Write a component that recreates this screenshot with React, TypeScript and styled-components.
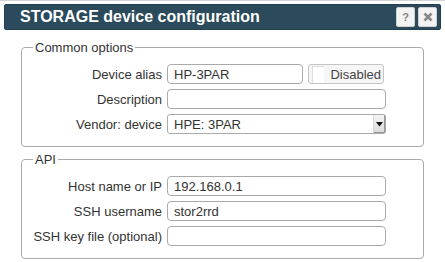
import styled, { createGlobalStyle } from "styled-components"

const GlobalStyle = createGlobalStyle`
  html, body {
    margin: 0;
    padding: 0;
    background: #ffffff;
  }
  body {
    font-family: "Liberation Sans", Arial, sans-serif;
    font-size: 13px;
    color: #333333;
  }
`

// dialog frame with a title bar and two fieldsets
const App = () => {
    return (
        <>
            <GlobalStyle />
            <Dialog>
                <TitleBar>
                    <Title>STORAGE device configuration</Title>
                    <TitleButtons>
                        <TitleButton title="Help">?</TitleButton>
                        <TitleButton title="Close">
                            <svg width="10" height="10" viewBox="0 0 10 10">
                                <path d="M1.5 1.5 L8.5 8.5 M8.5 1.5 L1.5 8.5" stroke="#888" strokeWidth="2.6" />
                            </svg>
                        </TitleButton>
                    </TitleButtons>
                </TitleBar>

                <Content>
                    <Group>
                        <Legend>Common options</Legend>
                        <Row>
                            <Label>Device alias</Label>
                            <Input $width={136} defaultValue="HP-3PAR" />
                            <ToggleButton>
                                <ToggleBox />
                                <span>Disabled</span>
                            </ToggleButton>
                        </Row>
                        <Row>
                            <Label>Description</Label>
                            <Input $width={219} defaultValue="" />
                        </Row>
                        <Row>
                            <Label>Vendor: device</Label>
                            <Select>
                                <SelectText>HPE: 3PAR</SelectText>
                                <SelectArrow>
                                    <svg width="7" height="5" viewBox="0 0 7 5">
                                        <path d="M0 0 H7 L3.5 4.5 Z" fill="#111" />
                                    </svg>
                                </SelectArrow>
                            </Select>
                        </Row>
                    </Group>

                    <Group>
                        <Legend>API</Legend>
                        <Row>
                            <Label>Host name or IP</Label>
                            <Input $width={219} defaultValue="192.168.0.1" />
                        </Row>
                        <Row>
                            <Label>SSH username</Label>
                            <Input $width={219} defaultValue="stor2rrd" />
                        </Row>
                        <Row>
                            <Label>SSH key file (optional)</Label>
                            <Input $width={219} defaultValue="" />
                        </Row>
                    </Group>
                </Content>
            </Dialog>
        </>
    )
}

export default App

const Dialog = styled.div`
  width: 445px;
  height: 262px;
  box-sizing: border-box;
  border-top: 1px solid #d3d3d3;
  padding: 3px 4px 0 4px;
  overflow: hidden;
`

const TitleBar = styled.div`
  height: 26px;
  box-sizing: border-box;
  background: #2b4a5b;
  border: 1px solid #24404f;
  border-radius: 2px;
  display: flex;
  align-items: center;
  justify-content: space-between;
  padding: 0 3px 0 15px;
`

const Title = styled.div`
  color: #ffffff;
  font-weight: bold;
  font-size: 16px;
`

const TitleButtons = styled.div`
  display: flex;
  gap: 3px;
`

const TitleButton = styled.div`
  width: 19px;
  height: 20px;
  box-sizing: border-box;
  background: #f3f3f3;
  border: 1px solid #d0d0d0;
  border-radius: 2px;
  display: flex;
  align-items: center;
  justify-content: center;
  color: #888888;
  font-weight: bold;
  font-size: 11px;
`

const Content = styled.div`
  padding: 10px 17px 0 17px;
  display: flex;
  flex-direction: column;
  gap: 5px;
`

const Group = styled.fieldset`
  margin: 0;
  padding: 9px 0 12px 0;
  border: 1px solid #aaaaaa;
  border-radius: 4px;
  display: flex;
  flex-direction: column;
  gap: 5px;
  min-width: 0;
`

const Legend = styled.legend`
  margin-left: 11px;
  padding: 0 2px;
  font-size: 13px;
  color: #333333;
`

const Row = styled.div`
  display: flex;
  align-items: center;
  gap: 5px;
  height: 20px;
`

const Label = styled.label`
  width: 140px;
  text-align: right;
  font-size: 13px;
  color: #333333;
  white-space: nowrap;
`

const Input = styled.input<{ $width: number }>`
  width: ${p => p.$width}px;
  height: 20px;
  box-sizing: border-box;
  border: 1px solid #aaaaaa;
  border-radius: 4px;
  padding: 0 6px;
  font-family: "Liberation Sans", Arial, sans-serif;
  font-size: 13px;
  color: #333333;
  outline: none;
  background: #ffffff;
`

const ToggleButton = styled.div`
  width: 76px;
  height: 20px;
  box-sizing: border-box;
  border: 1px solid #c5c5c5;
  border-radius: 3px;
  background: #f6f6f6;
  display: flex;
  align-items: center;
  justify-content: space-between;
  padding: 1px 2px 1px 3px;
  font-size: 13px;
  color: #454545;
`

const ToggleBox = styled.span`
  width: 11px;
  height: 16px;
  background: #ffffff;
  border-left: 1px solid #dddddd;
  border-top: 1px solid #dddddd;
`

const Select = styled.div`
  width: 219px;
  height: 20px;
  box-sizing: border-box;
  border: 1px solid #aaaaaa;
  border-radius: 3px;
  display: flex;
  align-items: center;
  justify-content: space-between;
  background: #ffffff;
`

const SelectText = styled.span`
  padding-left: 6px;
  font-size: 13px;
  color: #333333;
`

const SelectArrow = styled.span`
  width: 12px;
  height: 18px;
  box-sizing: border-box;
  background: linear-gradient(#f4f4f4, #dadada);
  border-left: 1px solid #d8d8d8;
  box-shadow: inset -1px -1px 0 #999;
  display: flex;
  align-items: center;
  justify-content: center;
`
